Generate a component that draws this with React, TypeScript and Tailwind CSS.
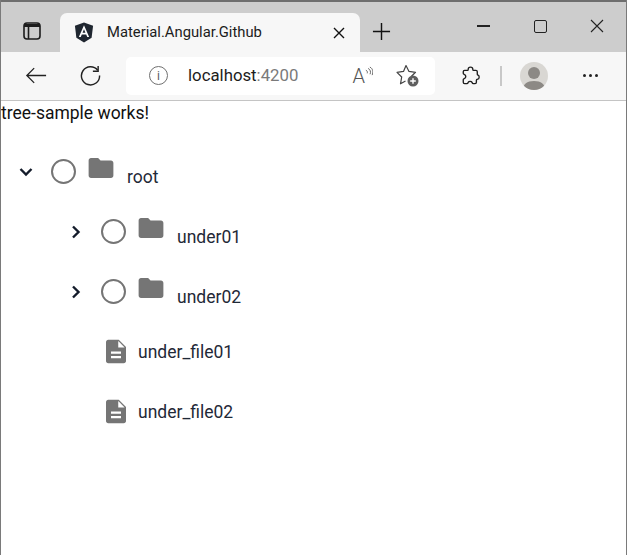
const roboto = "font-['Roboto',sans-serif]";

function TabStrip() {
  return (
    <div className="flex h-[52px] items-end bg-[#cdcdcd] border-t-2 border-[#6e6e6e]">
      <div className="flex h-[39px] w-[59px] items-center justify-center pl-[2px] pb-[3px]">
        <svg width="18" height="18" viewBox="0 0 18 18" fill="none" stroke="#1c1c1c" strokeWidth="1.6">
          <rect x="1" y="1" width="16" height="16" rx="3" />
          <path d="M1 3.500h16" strokeWidth="3" />
          <path d="M5.500 4V17" />
        </svg>
      </div>
      <div className="flex h-[39px] w-[300px] items-center rounded-t-[7px] bg-[#f7f7f7] pl-[14px] pr-[15px] pb-[1px]">
        <svg width="20" height="21" viewBox="0 0 20 22" className="shrink-0">
          <path d="M10 0.5 19.500 3.800 18 16.500 10 21.500 2 16.500 0.500 3.800Z" fill="#1f2630" />
          <path d="M10 3.500 4.600 15.800h2l1.100-2.800h4.600l1.100 2.800h2ZM8.500 11.200 10 7.600l1.500 3.600Z" fill="#fff" />
        </svg>
        <span className={`ml-[13px] flex-1 text-[14.8px] text-[#1c1c1c] ${roboto}`}>Material.Angular.Github</span>
        <svg width="12" height="12" viewBox="0 0 12 12" stroke="#111" strokeWidth="1.400" className="mb-[-2px]">
          <path d="M1 1l10 10M11 1 1 11" />
        </svg>
      </div>
      <div className="flex h-[39px] w-[43px] items-center justify-center pb-[2px]">
        <svg width="19" height="19" viewBox="0 0 20 20" stroke="#111" strokeWidth="1.500">
          <path d="M10 1v18M1 10h18" />
        </svg>
      </div>
      <div className="ml-auto flex h-[50px] items-center self-start pb-[2px]">
        <div className="flex w-[58px] justify-center">
          <div className="h-[1.500px] w-[13px] bg-[#222]" />
        </div>
        <div className="flex w-[57px] justify-center pr-[1px]">
          <div className="h-[13px] w-[13px] rounded-[2px] border border-[#222]" />
        </div>
        <div className="flex w-[57px] justify-center pr-[1px]">
          <svg width="14" height="14" viewBox="0 0 14 14" stroke="#222" strokeWidth="1.100">
            <path d="M1 1l12 12M13 1 1 13" />
          </svg>
        </div>
      </div>
    </div>
  );
}

function Toolbar() {
  return (
    <div className="flex h-[49px] items-center border-b border-[#c4c4c4] bg-[#f7f7f7] pb-[1px]">
      <div className="flex w-[125px] shrink-0 items-center pl-[24px]">
        <svg width="22" height="17" viewBox="0 0 24 18" fill="none" stroke="#222" strokeWidth="1.400">
          <path d="M23 9H2M10 1 2 9l8 8" />
        </svg>
        <svg width="21" height="21" viewBox="0 0 22 22" fill="none" stroke="#222" strokeWidth="1.500" className="ml-[33px]">
          <path d="M18.500 5.500A9.500 9.500 0 1 0 20.500 11" />
          <path d="M19 1v5.500h-5.500" />
        </svg>
      </div>
      <div className="flex h-[38px] w-[309px] shrink-0 items-center rounded-[5px] bg-white pl-[23px]">
        <div className={`flex h-[19px] w-[19px] items-center justify-center rounded-full border border-[#707070] text-[12px] text-[#606060] ${roboto}`}>
          i
        </div>
        <span className={`ml-[20px] text-[16.800px] text-[#1c1c1c] ${roboto}`}>
          localhost<span className="text-[#7a7a7a]">:4200</span>
        </span>
        <span className={`ml-[54px] text-[20px] font-light text-[#555] ${roboto}`}>A</span>
        <svg width="8" height="12" viewBox="0 0 9 12" fill="none" stroke="#555" className="mb-[8px]">
          <path d="M1 4c1.500.5 2 2 1.500 3.500M3.500 2c2.500 1 3.300 4 2.200 6.500M5.500.5c3.500 1.500 4 6 2.500 9" />
        </svg>
        <svg width="23" height="23" viewBox="0 0 23 23" fill="none" stroke="#444" strokeWidth="1.200" strokeLinejoin="round" className="ml-[23px]">
          <path d="M9.500 17l-5 2.800 1.200-6.800L1 8.300l6.500-.9L10 1.500l3 5.900 6.500.9-4.500 4.400" />
          <circle cx="17" cy="17" r="5.500" fill="#5e5e5e" stroke="none" />
          <path d="M17 14.200v5.600M14.200 17h5.600" stroke="#fff" strokeWidth="1.400" />
        </svg>
      </div>
      <svg width="19" height="20" viewBox="0 0 21 22" fill="none" stroke="#1e1e1e" strokeWidth="1.500" className="ml-[26px] shrink-0">
        <path d="M8 3.500c0-3 5-3 5 0 0 .8 0 1.300 1 1.300h2.500c1 0 1.500.6 1.500 1.500V9c0 .8.500 1 1 1 1.500.5 1.500 4.500-.5 4.500-.8 0-1.500.3-1.500 1.200v2.300c0 1-.6 1.500-1.500 1.500H13.500c-1 0-1-.8-1.300-1.500-.8-1.500-3.500-1.500-4.200 0-.3.800-.5 1.500-1.500 1.500H4c-1 0-1.500-.6-1.500-1.500V15c0-1 .8-1 1.500-1.300 1.700-.8 1.700-3.500 0-4.300C3.300 9 2.500 9 2.500 8V6.300c0-1 .6-1.500 1.500-1.500h3c.6 0 1-.4 1-1.300Z" />
      </svg>
      <div className="ml-[20px] h-[20px] w-[2px] shrink-0 bg-[#c8c8c8]" />
      <div className="ml-[18px] flex h-[28px] w-[28px] shrink-0 items-end justify-center overflow-hidden rounded-full bg-[#d9d7d3]">
        <svg width="22" height="24" viewBox="0 0 22 24" fill="#8c8985">
          <circle cx="11" cy="7" r="6" />
          <path d="M0 24c0-6 4-9 11-9s11 3 11 9Z" />
        </svg>
      </div>
      <div className="ml-[35px] flex shrink-0 gap-[3px]">
        <div className="h-[3px] w-[3px] rounded-full bg-[#222]" />
        <div className="h-[3px] w-[3px] rounded-full bg-[#222]" />
        <div className="h-[3px] w-[3px] rounded-full bg-[#222]" />
      </div>
    </div>
  );
}

function Chevron({ open }: { open: boolean }) {
  return (
    <div className="flex w-[37px] shrink-0 items-center justify-center pt-[1px]">
      <svg width="16" height="16" viewBox="0 0 16 16" fill="none" stroke="#141c2b" strokeWidth="2.400">
        {open ? <path d="M2.500 5 8 10.500 13.500 5" /> : <path d="M5 2.500 10.500 8 5 13.500" />}
      </svg>
    </div>
  );
}

function FolderRow({ label, open, indent }: { label: string; open: boolean; indent: string }) {
  return (
    <div className={`flex h-[60px] items-center ${indent}`}>
      <Chevron open={open} />
      <div className="ml-[7px] h-[25px] w-[25px] shrink-0 rounded-full border-2 border-[#757575]" />
      <svg width="26" height="20" viewBox="0 0 26 21" fill="#757575" className="mb-[6px] ml-[12px] shrink-0">
        <path d="M2.500 0H10l2.500 2.700h11c1.400 0 2.500 1.100 2.500 2.500V18.500c0 1.400-1.100 2.500-2.500 2.500h-21C1.100 21 0 19.900 0 18.500v-16C0 1.100 1.100 0 2.500 0Z" />
      </svg>
      <span className={`ml-[13px] mt-[12px] text-[17.500px] text-[#1f2937] ${roboto}`}>{label}</span>
    </div>
  );
}

function FileRow({ label }: { label: string }) {
  return (
    <div className="flex h-[60px] items-center pl-[106px]">
      <svg width="20" height="25" viewBox="0 0 22 26" className="shrink-0">
        <path d="M2.500 0H14l8 8v15.500c0 1.400-1.100 2.500-2.500 2.500h-17C1.100 26 0 24.900 0 23.500v-21C0 1.100 1.100 0 2.500 0Z" fill="#757575" />
        <path d="M13.500 1.500V8.500H20.500Z" fill="#fff" />
        <path d="M5.500 13h11v2.500h-11ZM5.500 18h11v2.500h-11Z" fill="#fff" />
      </svg>
      <span className={`ml-[12px] mt-[2px] text-[17.500px] text-[#1f2937] ${roboto}`}>{label}</span>
    </div>
  );
}

export default function App() {
  return (
    <div className="flex h-[555px] w-[627px] flex-col overflow-hidden border-x border-[#7a7a7a] bg-white">
      <TabStrip />
      <Toolbar />
      <p className={`text-[17.500px] leading-[25px] text-[#111] ${roboto}`}>tree-sample works!</p>
      <div className="mt-[15px] -ml-px">
        <FolderRow label="root" open indent="pl-[7px]" />
        <FolderRow label="under01" open={false} indent="pl-[57px]" />
        <FolderRow label="under02" open={false} indent="pl-[57px]" />
        <FileRow label="under_file01" />
        <FileRow label="under_file02" />
      </div>
    </div>
  );
}
